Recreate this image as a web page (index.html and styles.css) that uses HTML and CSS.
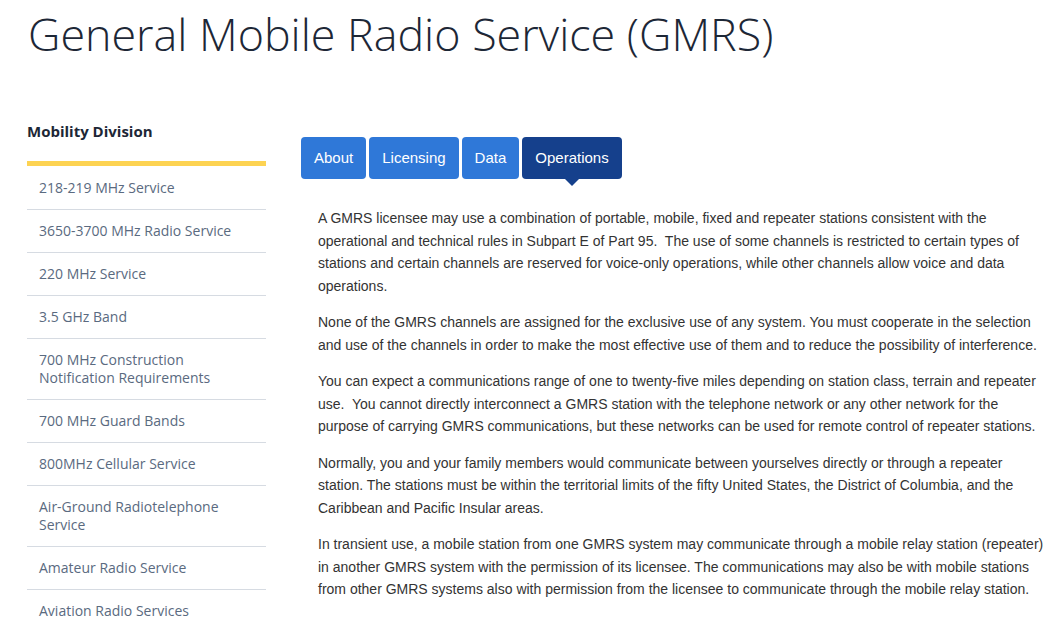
FILE: index.html
```html
<!DOCTYPE html>
<html lang="en">
<head>
<meta charset="utf-8">
<title>General Mobile Radio Service (GMRS)</title>
<link rel="stylesheet" href="styles.css">
</head>
<body>
<div class="page">
  <h1 class="title">General Mobile Radio Service (GMRS)</h1>
  <div class="layout">
    <aside class="sidebar">
      <h2 class="side-head">Mobility Division</h2>
      <div class="side-bar"></div>
      <ul class="side-list">
        <li>218-219 MHz Service</li>
        <li>3650-3700 MHz Radio Service</li>
        <li>220 MHz Service</li>
        <li>3.5 GHz Band</li>
        <li>700 MHz Construction Notification Requirements</li>
        <li>700 MHz Guard Bands</li>
        <li>800MHz Cellular Service</li>
        <li>Air-Ground Radiotelephone Service</li>
        <li>Amateur Radio Service</li>
        <li>Aviation Radio Services</li>
      </ul>
    </aside>
    <main class="main">
      <nav class="tabs">
        <span class="tab">About</span>
        <span class="tab">Licensing</span>
        <span class="tab">Data</span>
        <span class="tab active">Operations</span>
      </nav>
      <div class="content">
        <p>A GMRS licensee may use a combination of portable, mobile, fixed and repeater stations consistent with the operational and technical rules in Subpart E of Part 95.&nbsp; The use of some channels is restricted to certain types of stations and certain channels are reserved for voice-only operations, while other channels allow voice and data operations.</p>
        <p>None of the GMRS channels are assigned for the exclusive use of any system. You must cooperate in the selection and use of the channels in order to make the most effective use of them and to reduce the possibility of interference.</p>
        <p>You can expect a communications range of one to twenty-five miles depending on station class, terrain and repeater use.&nbsp; You cannot directly interconnect a GMRS station with the telephone network or any other network for the purpose of carrying GMRS communications, but these networks can be used for remote control of repeater stations.</p>
        <p>Normally, you and your family members would communicate between yourselves directly or through a repeater station. The stations must be within the territorial limits of the fifty United States, the District of Columbia, and the Caribbean and Pacific Insular areas.</p>
        <p>In transient use, a mobile station from one GMRS system may communicate through a mobile relay station (repeater) in another GMRS system with the permission of its licensee. The communications may also be with mobile stations from other GMRS systems also with permission from the licensee to communicate through the mobile relay station.</p>
      </div>
    </main>
  </div>
</div>
</body>
</html>
```

FILE: styles.css
```css
html, body {
  margin: 0;
  padding: 0;
  background: #ffffff;
}

.page {
  padding: 0 0 0 27px;
  overflow: hidden;
  height: 625px;
}

.title {
  margin: 0;
  padding: 3px 0 0 1px;
  font-family: "Open Sans", sans-serif;
  font-weight: 300;
  font-size: 44.8px;
  line-height: 62px;
  color: #1d2736;
  letter-spacing: 0;
}

.layout {
  display: flex;
  margin-top: 53px;
}

.sidebar {
  width: 239px;
  flex: none;
}

.side-head {
  margin: 0;
  font-family: "Open Sans", sans-serif;
  font-weight: 700;
  font-size: 15px;
  line-height: 26px;
  color: #1d2736;
}

.side-bar {
  height: 5px;
  background: #fdd352;
  margin-top: 17px;
}

.side-list {
  list-style: none;
  margin: 0;
  padding: 0;
}

.side-list li {
  font-family: "Open Sans", sans-serif;
  font-size: 14px;
  line-height: 18px;
  color: #5a6a80;
  padding: 12px 12px 12px 12px;
  border-bottom: 1px solid #d6dbe2;
}

.side-list li:first-child {
  padding-top: 13px;
}

.main {
  flex: 1;
  margin-left: 35px;
  padding-top: 19px;
}

.tabs {
  display: flex;
  gap: 3px;
}

.tab {
  position: relative;
  font-family: "Liberation Sans", Arial, sans-serif;
  font-size: 15px;
  line-height: 42px;
  height: 42px;
  padding: 0 13px;
  color: #ffffff;
  background: #2f78d8;
  border-radius: 4px;
}

.tab.active {
  background: #15408c;
}

.tab.active::after {
  content: "";
  position: absolute;
  left: 50%;
  bottom: -7px;
  margin-left: -7px;
  border-left: 7px solid transparent;
  border-right: 7px solid transparent;
  border-top: 7px solid #15408c;
}

.content {
  padding: 28px 0 0 17px;
  width: 730px;
}

.content p {
  margin: 0 0 14px 0;
  font-family: "Liberation Sans", Arial, sans-serif;
  font-size: 14px;
  line-height: 22.5px;
  color: #333333;
}
```
